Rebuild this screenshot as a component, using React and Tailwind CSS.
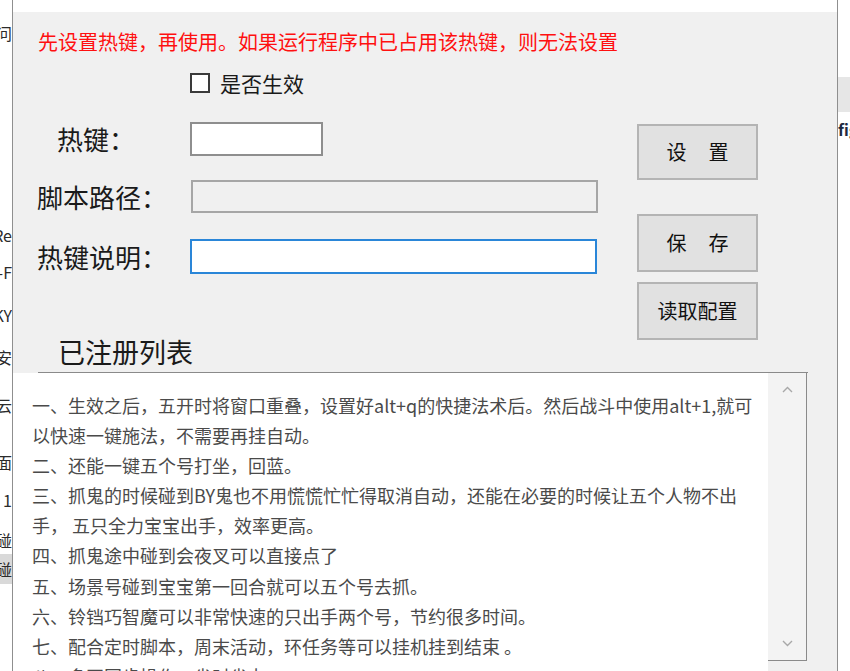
import React from 'react'

const FONT = { fontFamily: '"Noto Sans CJK SC", "Noto Sans", sans-serif' }

const NOTES = [
  '一、生效之后，五开时将窗口重叠，设置好alt+q的快捷法术后。然后战斗中使用alt+1,就可',
  '以快速一键施法，不需要再挂自动。',
  '二、还能一键五个号打坐，回蓝。',
  '三、抓鬼的时候碰到BY鬼也不用慌慌忙忙得取消自动，还能在必要的时候让五个人物不出',
  '手， 五只全力宝宝出手，效率更高。',
  '四、抓鬼途中碰到会夜叉可以直接点了',
  '五、场景号碰到宝宝第一回合就可以五个号去抓。',
  '六、铃铛巧智魔可以非常快速的只出手两个号，节约很多时间。',
  '七、配合定时脚本，周末活动，环任务等可以挂机挂到结束 。',
  '八、多开同步操作，省时省力。',
]

// fragments of the window behind, cut by the dialog's left edge
const BEHIND = [
  { top: 22, text: '询问' },
  { top: 180, text: 'Re' },
  { top: 15, text: '-F' },
  { top: 21, text: 'KY' },
  { top: 20, text: '安' },
  { top: 26, text: '云' },
  { top: 35, text: '面' },
  { top: 16, text: '1' },
  { top: 18, text: '碰' },
]

function Chevron({ up }) {
  return (
    <svg width="11" height="7" viewBox="0 0 11 7" fill="none">
      <path d={up ? 'M1 6L5.5 1.5L10 6' : 'M1 1L5.5 5.5L10 1'} stroke="#a8a8a8" strokeWidth="1.4" />
    </svg>
  )
}

function Button({ children }) {
  return (
    <div className="flex items-center justify-center gap-[22px] bg-[#e1e1e1] border-2 border-[#b4b4b4] text-[20px] text-[#111] w-[121px]">
      {children}
    </div>
  )
}

export default function App() {
  return (
    <div className="flex w-[850px] h-[671px] overflow-hidden bg-white" style={FONT}>
      {/* background window, left */}
      <div className="w-[12px] flex-shrink-0 flex flex-col overflow-hidden text-[16px] text-[#2b2b2b]">
        {BEHIND.map((b, i) => (
          <div key={i} className="flex justify-end whitespace-nowrap leading-[22px] h-[22px] flex-shrink-0" style={{ marginTop: b.top }}>
            {b.text}
          </div>
        ))}
        <div className="mt-[3px] h-[30px] flex-shrink-0 bg-[#d9d9d9] flex items-center justify-end whitespace-nowrap leading-[22px]">碰</div>
      </div>

      {/* dialog */}
      <div className="w-[826px] flex-shrink-0 flex flex-col border-x border-[#8f8f8f]">
        <div className="h-[12px] bg-white flex-shrink-0" />
        <div className="flex-1 flex flex-col bg-[#f0f0f0]">
          <div className="mt-[18px] ml-[25px] h-[24px] leading-[24px] text-[20px] text-[#ff1010] whitespace-nowrap">
            先设置热键，再使用。如果运行程序中已占用该热键，则无法设置
          </div>

          <div className="mt-[18px] ml-[177px] h-[22px] flex items-center gap-[10px]">
            <div className="w-[20px] h-[20px] flex-shrink-0 border-2 border-[#3a3a3a] bg-white" />
            <span className="text-[21px] leading-[22px] text-[#1a1a1a]">是否生效</span>
          </div>

          <div className="flex">
            <div className="flex flex-col w-[586px]">
              <div className="mt-[28px] h-[34px] flex items-center">
                <span className="ml-[44px] w-[133px] text-[26px] leading-[34px] text-[#1a1a1a]">热键：</span>
                <div className="w-[133px] h-[34px] bg-white border-2 border-[#8e8e8e]" />
              </div>
              <div className="mt-[24px] h-[33px] flex items-center">
                <span className="ml-[24px] w-[154px] text-[26px] leading-[34px] text-[#1a1a1a]">脚本路径：</span>
                <div className="w-[407px] h-[33px] bg-[#f0f0f0] border-2 border-[#a6a6a6]" />
              </div>
              <div className="mt-[26px] h-[35px] flex items-center">
                <span className="ml-[24px] w-[153px] text-[26px] leading-[34px] text-[#1a1a1a]">热键说明：</span>
                <div className="w-[407px] h-[35px] bg-white border-2 border-[#2a86d8]" />
              </div>
              <div className="mt-[61px] ml-[45px] h-[33px] leading-[33px] text-[27px] text-[#1a1a1a]">已注册列表</div>
            </div>
            <div className="flex flex-col ml-[38px] mt-[30px]">
              <div className="h-[56px] flex"><Button><span>设</span><span>置</span></Button></div>
              <div className="mt-[34px] h-[58px] flex"><Button><span>保</span><span>存</span></Button></div>
              <div className="mt-[10px] h-[58px] flex"><Button><span>读取配置</span></Button></div>
            </div>
          </div>

          <div className="mt-[4px] ml-[25px] w-[770px] h-px bg-[#8a8a8a]" />
          <div className="flex flex-1 min-h-0">
            <div className="w-[755px] bg-white pt-[17px] pl-[19px] text-[18px] text-[#4a4a4a] overflow-hidden">
              {NOTES.map((line, i) => (
                <div key={i} className="h-[30.1px] leading-[30px] whitespace-nowrap">{line}</div>
              ))}
            </div>
            <div className="flex flex-col">
              <div className="flex">
                <div className="w-[38px] h-[287px] bg-[#f3f3f3] flex flex-col items-center justify-between py-[13px]">
                  <Chevron up />
                  <Chevron />
                </div>
                <div className="w-px h-[287px] bg-[#8a8a8a]" />
              </div>
              <div className="w-[39px] h-px bg-[#8a8a8a]" />
            </div>
          </div>
        </div>
      </div>

      {/* background window, right */}
      <div className="flex-1 flex flex-col overflow-hidden">
        <div className="mt-[77px] h-[35px] bg-[#e6e6e6]" />
        <div className="mt-[6px] h-[22px] leading-[22px] text-[16px] font-bold text-[#1e2a40] whitespace-nowrap">fig</div>
      </div>
    </div>
  )
}
